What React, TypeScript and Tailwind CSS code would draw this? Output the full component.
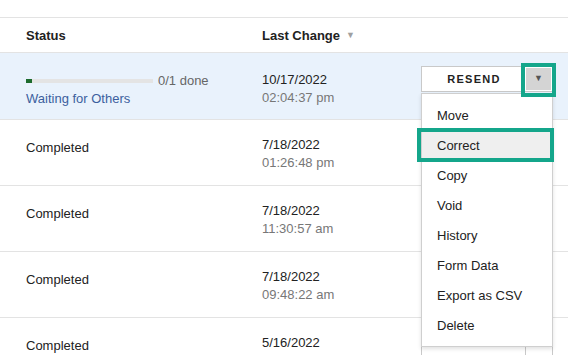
import React from "react";

const rows = [
  { date: "7/18/2022", time: "01:26:48 pm" },
  { date: "7/18/2022", time: "11:30:57 am" },
  { date: "7/18/2022", time: "09:48:22 am" },
  { date: "5/16/2022", time: "" },
];

const menu = ["Move", "Correct", "Copy", "Void", "History", "Form Data", "Export as CSV", "Delete"];

function Btn({ label }: { label: string }) {
  return (
    <div className="flex h-[26px] w-[132px] border border-[#c9c9c9] bg-white">
      <div className="flex flex-1 items-center justify-center text-[11px] font-bold tracking-[1.3px] text-[#222]">
        {label}
      </div>
      <div className="w-[27px] border-l border-[#c9c9c9]" />
    </div>
  );
}

export default function App() {
  return (
    <div
      className="relative h-[355px] w-[568px] overflow-hidden bg-white text-[13px] text-[#222]"
      style={{ fontFamily: '"Liberation Sans", Arial, Helvetica, sans-serif' }}
    >
      <div className="h-[18px] border-b border-[#e3e3e3]" />
      <div className="flex h-[35px] items-center border-b border-[#e3e3e3] pt-[1px] font-bold">
        <div className="w-[262px] pl-[26px]">Status</div>
        <div className="flex items-center gap-[6px]">
          Last Change
          <span className="text-[9px] text-[#a0a0a0]">▼</span>
        </div>
      </div>
      {/* highlighted row */}
      <div className="flex h-[67px] border-b border-[#e3e3e3] bg-[#e9f2fc]">
        <div className="w-[262px] pl-[26px] pt-[19px]">
          <div className="flex h-[18px] items-center">
            <div className="relative h-[4px] w-[127px] bg-[#e4e4e4]">
              <div className="absolute left-0 top-0 h-[4px] w-[6px] bg-[#1d6b2d]" />
            </div>
            <span className="ml-[5px] text-[#666]">0/1 done</span>
          </div>
          <div className="leading-[18px] text-[#3c5f9e]">Waiting for Others</div>
        </div>
        <div className="w-[159px] pt-[18px] leading-[18px]">
          <div>10/17/2022</div>
          <div className="text-[#777]">02:04:37 pm</div>
        </div>
        <div className="pt-[13px]">
          <div className="flex h-[26px] w-[132px] border border-[#c9c9c9] bg-white">
            <div className="flex flex-1 items-center justify-center text-[11px] font-bold tracking-[1.3px] text-[#222]">
              RESEND
            </div>
            <div className="my-[1px] mr-[1px] flex w-[25px] items-center justify-center bg-[#d4d4d4] text-[9px] text-[#555]">
              ▼
            </div>
          </div>
        </div>
      </div>
      {rows.map((r, i) => (
        <div key={i} className="flex h-[66px] border-b border-[#e3e3e3]">
          <div className="w-[262px] pl-[26px] pt-[19px] leading-[18px]">Completed</div>
          <div className="w-[159px] pt-[16px] leading-[18px]">
            <div>{r.date}</div>
            <div className="text-[#777]">{r.time}</div>
          </div>
          <div className="pt-[13px]">
            <Btn label="" />
          </div>
        </div>
      ))}

      {/* dropdown menu */}
      <div className="absolute left-[421px] top-[93px] w-[132px] border border-[#cfcfcf] bg-white pb-[5px] pt-[7px] shadow-[0_2px_4px_rgba(0,0,0,0.12)]">
        {menu.map((m) => (
          <div
            key={m}
            className={`flex h-[30px] items-center pl-[15px] ${m === "Correct" ? "bg-[#efefef]" : ""}`}
          >
            {m}
          </div>
        ))}
      </div>

      {/* highlight boxes */}
      <div className="absolute left-[417px] top-[128px] h-[34px] w-[137px] border-4 border-[#14a68b]" />
      <div className="absolute left-[521px] top-[63px] h-[34px] w-[35px] border-4 border-[#14a68b]" />
    </div>
  );
}
